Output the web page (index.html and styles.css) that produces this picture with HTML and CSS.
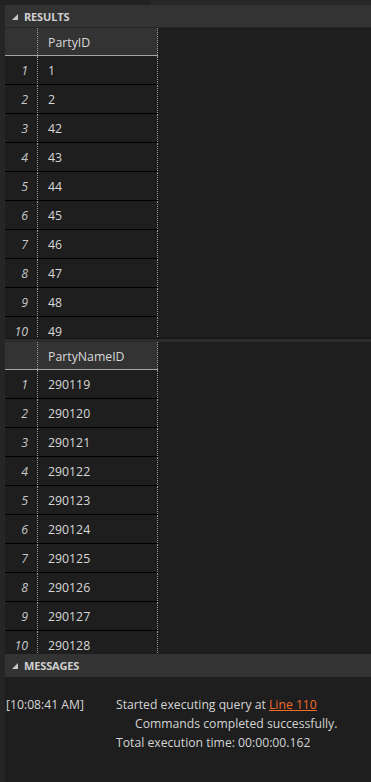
FILE: index.html
```html
<!DOCTYPE html>
<html>
<head>
<meta charset="utf-8">
<link rel="stylesheet" href="styles.css">
</head>
<body>
<div class="topstrip"><div class="top-left"></div><div class="top-right"></div></div>
<div class="pane">
  <div class="section-head results-head">
    <svg class="tri" width="6" height="6" viewBox="0 0 6 6"><polygon points="6,0 6,6 0,6" fill="#c8c8c8"/></svg>
    <span>RESULTS</span>
  </div>
  <div class="grid g1">
    <div class="row head"><div class="num"></div><div class="cell">PartyID</div></div>
    <div class="row"><div class="num">1</div><div class="cell">1</div></div>
    <div class="row"><div class="num">2</div><div class="cell">2</div></div>
    <div class="row"><div class="num">3</div><div class="cell">42</div></div>
    <div class="row"><div class="num">4</div><div class="cell">43</div></div>
    <div class="row"><div class="num">5</div><div class="cell">44</div></div>
    <div class="row"><div class="num">6</div><div class="cell">45</div></div>
    <div class="row"><div class="num">7</div><div class="cell">46</div></div>
    <div class="row"><div class="num">8</div><div class="cell">47</div></div>
    <div class="row"><div class="num">9</div><div class="cell">48</div></div>
    <div class="row"><div class="num">10</div><div class="cell">49</div></div>
  </div>
  <div class="split"></div>
  <div class="grid g2">
    <div class="row head"><div class="num"></div><div class="cell">PartyNameID</div></div>
    <div class="row"><div class="num">1</div><div class="cell">290119</div></div>
    <div class="row"><div class="num">2</div><div class="cell">290120</div></div>
    <div class="row"><div class="num">3</div><div class="cell">290121</div></div>
    <div class="row"><div class="num">4</div><div class="cell">290122</div></div>
    <div class="row"><div class="num">5</div><div class="cell">290123</div></div>
    <div class="row"><div class="num">6</div><div class="cell">290124</div></div>
    <div class="row"><div class="num">7</div><div class="cell">290125</div></div>
    <div class="row"><div class="num">8</div><div class="cell">290126</div></div>
    <div class="row"><div class="num">9</div><div class="cell">290127</div></div>
    <div class="row"><div class="num">10</div><div class="cell">290128</div></div>
  </div>
  <div class="section-head messages-head">
    <svg class="tri" width="6" height="6" viewBox="0 0 6 6"><polygon points="6,0 6,6 0,6" fill="#c8c8c8"/></svg>
    <span>MESSAGES</span>
  </div>
  <div class="messages">
    <div class="msg">
      <div class="time">[10:08:41 AM]</div>
      <div class="text">
        <div class="line">Started executing query at <a class="link">Line 110</a></div>
        <div class="line indent">Commands completed successfully.</div>
        <div class="line">Total execution time: 00:00:00.162</div>
      </div>
    </div>
  </div>
</div>
</body>
</html>
```

FILE: styles.css
```css
html, body {
  margin: 0;
  padding: 0;
}
body {
  background: #252526;
  width: 371px;
  height: 782px;
  overflow: hidden;
  font-family: "Open Sans", "Noto Sans", sans-serif;
  color: #d4d4d4;
}
.topstrip {
  height: 5px;
  display: flex;
}
.top-left {
  width: 151px;
  background: #222222;
}
.top-right {
  flex: 1;
  background: #282828;
}
.pane {
  margin-left: 5px;
  background: #1e1e1e;
  height: 777px;
  display: flex;
  flex-direction: column;
}
.section-head {
  background: #333333;
  display: flex;
  align-items: center;
  gap: 6px;
  padding-left: 7px;
  font-size: 11px;
  font-weight: 700;
  color: #d0d0d0;
  letter-spacing: -0.15px;
}
.results-head {
  height: 22px;
  border-bottom: 1px solid #262626;
}
.messages-head {
  height: 23px;
}
.tri {
  display: block;
  margin-top: 1px;
}
.grid {
  overflow: hidden;
  flex: none;
}
.g1 {
  height: 310px;
}
.g2 {
  height: 312px;
}
.g2 .head {
  height: 28px;
}
.split {
  height: 4px;
  border-top: 1px solid #151515;
  background: #2c2c2c;
  box-sizing: border-box;
  margin-right: -5px;
}
.row {
  display: flex;
  width: 153px;
  height: 28px;
  border-bottom: 1px solid #000000;
  font-size: 12.3px;
}
.row.head {
  height: 27px;
  background: #333333;
  border-bottom: 1px solid #a3a3a3;
}
.num {
  width: 33px;
  border-right: 1px dotted #9a9a9a;
  padding-right: 9px;
  box-sizing: border-box;
  display: flex;
  align-items: center;
  justify-content: flex-end;
  font-style: italic;
  color: #c8c8c8;
}
.cell {
  width: 120px;
  box-sizing: border-box;
  border-right: 1px dotted #9a9a9a;
  padding-left: 10px;
  display: flex;
  align-items: center;
  color: #d8d8d8;
}
.head .cell {
  padding-top: 1px;
}
.messages {
  flex: 1;
  padding-top: 18px;
  font-size: 12.2px;
  color: #d4d4d4;
}
.msg {
  display: flex;
}
.time {
  width: 110px;
  padding-left: 1px;
  line-height: 19px;
}
.line {
  line-height: 19px;
}
.indent {
  padding-left: 19px;
}
.link {
  color: #f26b2a;
  text-decoration: underline;
}
```
